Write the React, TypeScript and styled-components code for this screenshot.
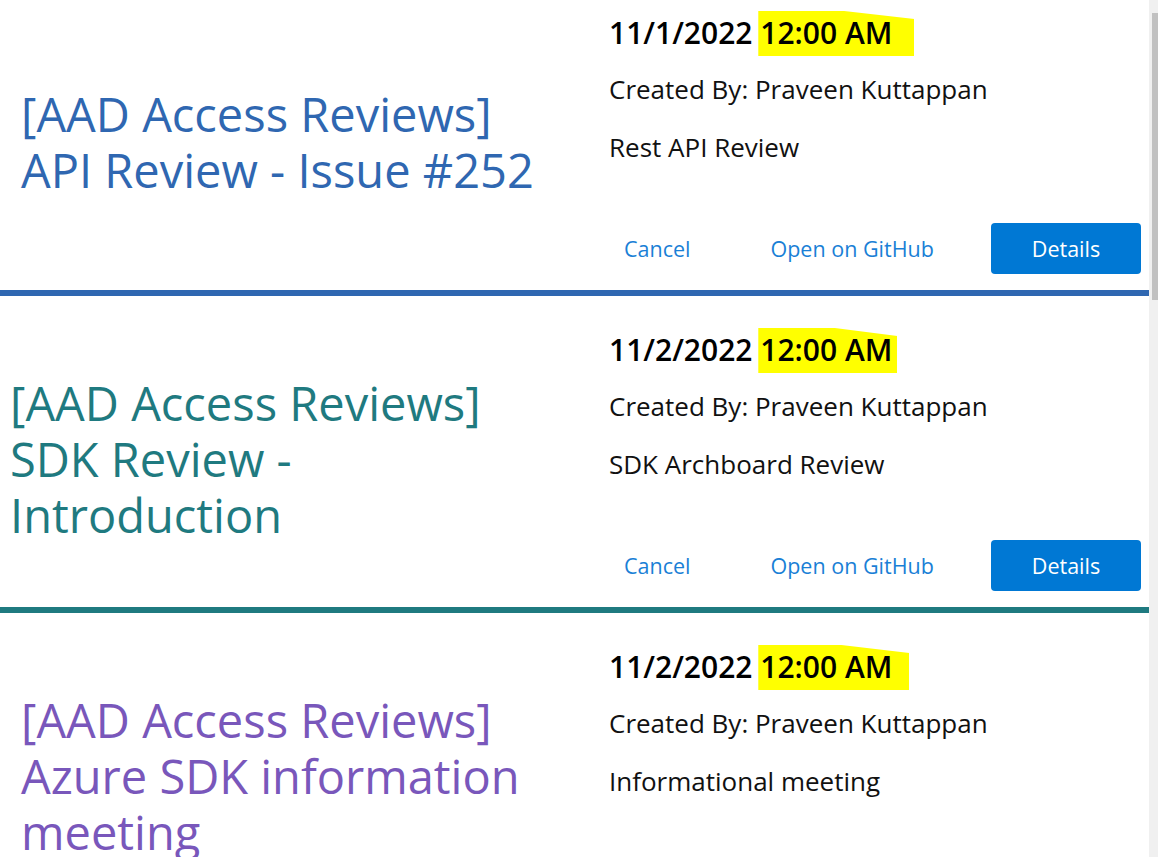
import React from "react";
import styled, { createGlobalStyle } from "styled-components";

const Global = createGlobalStyle`
  html, body { margin: 0; padding: 0; background: #fff; overflow: hidden; }
  body { font-family: "Open Sans", "Noto Sans", sans-serif; color: #111; }
  * { box-sizing: border-box; }
`;

const Page = styled.div`
  display: flex;
  width: 1158px;
  height: 857px;
  overflow: hidden;
`;

const List = styled.main`
  flex: 1;
  margin-top: -21px; /* scrolled position */
  display: flex;
  flex-direction: column;
`;

const ScrollTrack = styled.div`
  width: 9px;
  background: #f0f0f0;
  display: flex;
  justify-content: flex-end;
  padding-top: 13px;
`;

const ScrollThumb = styled.div`
  width: 6px;
  height: 287px;
  background: #c1c1c1;
`;

const Card = styled.section<{ $rule: string }>`
  display: grid;
  grid-template-columns: 609px 1fr;
  min-height: 317px;
  border-bottom: 6px solid ${(p) => p.$rule};
`;

const TitleCell = styled.div<{ $indent: number }>`
  display: flex;
  align-items: center;
  padding: 15px 0 0 ${(p) => p.$indent}px;
`;

const Title = styled.h2<{ $color: string }>`
  margin: 0;
  max-width: 550px;
  font-family: "Open Sans", "Noto Sans", sans-serif;
  font-weight: 400;
  font-size: 47px;
  line-height: 56px;
  color: ${(p) => p.$color};
`;

const Info = styled.div`
  display: flex;
  flex-direction: column;
  padding: 35px 8px 16px 0;
`;

const DateLine = styled.div`
  font-size: 30px;
  font-weight: 600;
  line-height: 38px;
  color: #000;
  white-space: nowrap;
`;

const Highlight = styled.span<{ $extend: number }>`
  position: relative;
  z-index: 0;
  &::before {
    content: "";
    position: absolute;
    z-index: -1;
    left: -2px;
    right: -${(p) => p.$extend}px;
    top: -1px;
    bottom: -3px;
    background: #ffff00;
    clip-path: polygon(0 0, 55% 0, 100% 18%, 100% 100%, 0 100%);
  }
`;

const Meta = styled.div<{ $gap: number }>`
  margin-top: ${(p) => p.$gap}px;
  font-size: 26px;
  line-height: 38px;
  color: #111;
  white-space: nowrap;
`;

const Actions = styled.div`
  margin-top: auto;
  display: flex;
  align-items: center;
  height: 51px;
`;

const LinkButton = styled.button<{ $space: number }>`
  margin-left: ${(p) => p.$space}px;
  padding: 0 15px;
  height: 51px;
  border: none;
  background: transparent;
  font-family: "Open Sans", "Noto Sans", sans-serif;
  font-size: 21.5px;
  color: #1a7fd6;
  cursor: pointer;
`;

const PrimaryButton = styled.button`
  margin-left: auto;
  width: 150px;
  height: 51px;
  border: none;
  border-radius: 4px;
  background: #0078d4;
  color: #fff;
  font-family: "Open Sans", "Noto Sans", sans-serif;
  font-size: 21.5px;
  cursor: pointer;
`;

type Review = {
  title: string;
  color: string;
  date: string;
  desc: string;
  indent: number;
  extend: number;
};

const reviews: Review[] = [
  {
    title: "[AAD Access Reviews] API Review - Issue #252",
    color: "#2f67b1",
    date: "11/1/2022",
    desc: "Rest API Review",
    indent: 21,
    extend: 22,
  },
  {
    title: "[AAD Access Reviews] SDK Review - Introduction",
    color: "#1f7a80",
    date: "11/2/2022",
    desc: "SDK Archboard Review",
    indent: 10,
    extend: 5,
  },
  {
    title: "[AAD Access Reviews] Azure SDK information meeting",
    color: "#7957bb",
    date: "11/2/2022",
    desc: "Informational meeting",
    indent: 21,
    extend: 17,
  },
];

function ReviewCard({ r }: { r: Review }) {
  return (
    <Card $rule={r.color}>
      <TitleCell $indent={r.indent}>
        <Title $color={r.color}>{r.title}</Title>
      </TitleCell>
      <Info>
        <DateLine>
          {r.date} <Highlight $extend={r.extend}>12:00 AM</Highlight>
        </DateLine>
        <Meta $gap={18}>Created By: Praveen Kuttappan</Meta>
        <Meta $gap={20}>{r.desc}</Meta>
        <Actions>
          <LinkButton $space={0}>Cancel</LinkButton>
          <LinkButton $space={50}>Open on GitHub</LinkButton>
          <PrimaryButton>Details</PrimaryButton>
        </Actions>
      </Info>
    </Card>
  );
}

export default function App() {
  return (
    <Page>
      <Global />
      <List>
        {reviews.map((r) => (
          <ReviewCard key={r.date + r.desc} r={r} />
        ))}
      </List>
      <ScrollTrack>
        <ScrollThumb />
      </ScrollTrack>
    </Page>
  );
}
